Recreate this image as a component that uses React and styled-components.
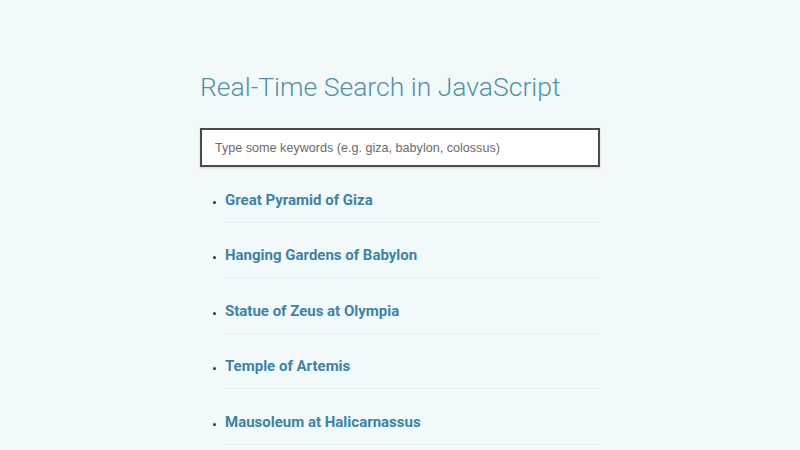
import React from "react";
import styled, { createGlobalStyle } from "styled-components";

const Global = createGlobalStyle`
  html, body { margin: 0; padding: 0; background: #f2f9fb; }
  body { font-family: Roboto, "Liberation Sans", sans-serif; }
`;

const Page = styled.main`
  width: 400px;
  margin: 0 auto;
  padding-top: 70px;
`;

const Title = styled.h1`
  margin: 0 0 24px;
  font-family: Roboto, sans-serif;
  font-weight: 300;
  font-size: 26.5px;
  line-height: 34px;
  white-space: nowrap;
  color: #5690a8;
`;

const Search = styled.input`
  box-sizing: border-box;
  display: block;
  width: 400px;
  height: 39px;
  padding: 0 13px;
  border: 2px solid #4a4a4a;
  background: #fff;
  font-family: "Liberation Sans", Arial, sans-serif;
  font-size: 12.6px;
  color: #333;
  outline: none;
  box-shadow: 0 1px 2px rgba(0,0,0,0.15);
  &::placeholder { color: #6b6b6b; }
`;

const List = styled.ul`
  margin: 0;
  padding: 0 0 0 25px;
  list-style: disc;
`;

const Item = styled.li`
  margin-top: 11.5px;
  padding: 11px 0;
  border-bottom: 1px solid #e2eef2;
  font-weight: 700;
  font-size: 15px;
  line-height: 21px;
  color: #3f82a3;
  &::marker { color: #2b3a40; font-size: 9px; }
`;

const wonders = [
  "Great Pyramid of Giza",
  "Hanging Gardens of Babylon",
  "Statue of Zeus at Olympia",
  "Temple of Artemis",
  "Mausoleum at Halicarnassus",
  "Colossus of Rhodes",
  "Lighthouse of Alexandria",
];

export default function App() {
  return (
    <>
      <Global />
      <Page>
        <Title>Real-Time Search in JavaScript</Title>
        <Search placeholder="Type some keywords (e.g. giza, babylon, colossus)" />
        <List>
          {wonders.map((w) => (
            <Item key={w}>{w}</Item>
          ))}
        </List>
      </Page>
    </>
  );
}
